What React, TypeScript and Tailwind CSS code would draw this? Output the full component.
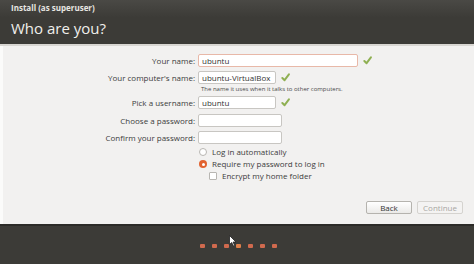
import React from "react";

const Check = () => (
  <svg width="9" height="9" viewBox="0 0 10 10" className="ml-[5px]">
    <path d="M1.5 5.5 L4 8 L8.8 1.5" fill="none" stroke="#8fb052" strokeWidth="2.2" strokeLinecap="round" strokeLinejoin="round" />
  </svg>
);

function Row({ label, children, mt }: { label: string; children: React.ReactNode; mt: string }) {
  return (
    <div className={`flex items-center ${mt}`}>
      <div className="w-[198px] pr-[3px] text-right text-[8px] text-[#3c3c3c]">{label}</div>
      {children}
    </div>
  );
}

function Input({ w, value, focus }: { w: string; value?: string; focus?: boolean }) {
  return (
    <div
      className={`${w} h-[13px] rounded-[2px] border bg-white px-[3px] text-[8px] leading-[11px] text-[#333] ${
        focus ? "border-[#e8b8a8]" : "border-[#c8c6c2]"
      }`}
    >
      {value}
    </div>
  );
}

export default function App() {
  return (
    <div
      className="flex h-[264px] w-[474px] flex-col overflow-hidden bg-[#3c3b37]"
      style={{ fontFamily: '"Open Sans", "DejaVu Sans", sans-serif' }}
    >
      <div className="h-[44px] bg-gradient-to-b from-[#4a4945] to-[#3c3b37] to-40% px-[11px]">
        <div className="pt-[3px] text-[8px] font-bold leading-[10px] text-[#e8e6e2]">Install (as superuser)</div>
        <div className="mt-[6px] text-[15px] leading-[18px] text-[#f0efec]">Who are you?</div>
      </div>
      <div className="h-[2px] bg-[#d8d6d2]" />
      <div className="flex h-[178px] flex-col border-l-[3px] border-[#fbfbfa] bg-[#f2f1f0]">
        <div className="ml-[-3px]">
          <Row label="Your name:" mt="mt-[8px]">
            <Input w="w-[160px]" value="ubuntu" focus />
            <Check />
          </Row>
          <Row label="Your computer's name:" mt="mt-[4px]">
            <Input w="w-[78px]" value="ubuntu-VirtualBox" />
            <Check />
          </Row>
          <div className="ml-[201px] mt-[1px] text-[6px] leading-[8px] text-[#4a4a4a]">
            The name it uses when it talks to other computers.
          </div>
          <Row label="Pick a username:" mt="mt-[3px]">
            <Input w="w-[78px]" value="ubuntu" />
            <Check />
          </Row>
          <Row label="Choose a password:" mt="mt-[5px]">
            <Input w="w-[84px]" />
          </Row>
          <Row label="Confirm your password:" mt="mt-[4px]">
            <Input w="w-[84px]" />
          </Row>
          <div className="ml-[199px] mt-[2px] flex flex-col text-[8px] text-[#3c3c3c]">
            <div className="flex h-[12px] items-center">
              <span className="mr-[5px] inline-block h-[8px] w-[8px] rounded-full border border-[#b8b6b2] bg-white" />
              Log in automatically
            </div>
            <div className="flex h-[12px] items-center">
              <span className="mr-[5px] flex h-[8px] w-[8px] items-center justify-center rounded-full bg-[#e2622f]">
                <span className="h-[3px] w-[3px] rounded-full bg-white" />
              </span>
              Require my password to log in
            </div>
            <div className="ml-[10px] flex h-[12px] items-center">
              <span className="mr-[5px] inline-block h-[8px] w-[8px] rounded-[1px] border border-[#b8b6b2] bg-white" />
              Encrypt my home folder
            </div>
          </div>
        </div>
        <div className="mt-auto mb-[10px] flex justify-end gap-[5px] pr-[11px]">
          <div className="flex h-[13px] w-[46px] items-center justify-center rounded-[2px] border border-[#b5b3ae] bg-gradient-to-b from-white to-[#ebeae8] text-[8px] text-[#333]">
            Back
          </div>
          <div className="flex h-[13px] w-[46px] items-center justify-center rounded-[2px] border border-[#d5d3cf] bg-[#f4f3f2] text-[8px] text-[#a8a6a2]">
            Continue
          </div>
        </div>
      </div>
      <div className="h-[2px] bg-[#2c2b28]" />
      <div className="flex flex-1 items-center justify-center">
        <div className="relative mt-[1px] flex gap-[7px] pl-[2px]">
          {[0, 1, 2, 3, 4, 5, 6].map((i) => (
            <span key={i} className={`h-[4px] w-[5px] rounded-[1px] ${i === 3 ? "bg-[#e0804a]" : "bg-[#d06a4e]"}`} />
          ))}
          <svg className="absolute left-[31px] top-[-9px]" width="8" height="12" viewBox="0 0 8 12">
            <path d="M0.5 0.5 L0.5 9.5 L2.7 7.5 L4.3 11 L5.6 10.4 L4.1 7 L7 7 Z" fill="#fff" stroke="#222" strokeWidth="0.8" />
          </svg>
        </div>
      </div>
    </div>
  );
}
